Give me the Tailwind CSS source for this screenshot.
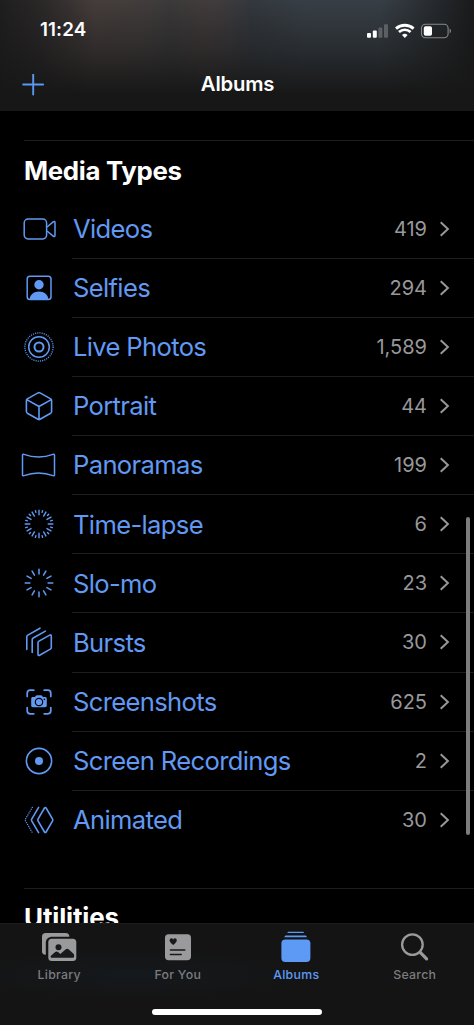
<!DOCTYPE html>
<html lang="en">
<head>
<meta charset="utf-8">
<title>Albums</title>
<script src="https://cdn.jsdelivr.net/npm/@tailwindcss/browser@4"></script>
</head>
<body class="bg-black">
<div class="relative flex h-[1025px] w-[474px] flex-col overflow-hidden bg-black font-['Inter',sans-serif] text-white">

  <header class="h-[111px] shrink-0 bg-[linear-gradient(to_bottom,transparent_0%,rgba(22,22,22,0.45)_45%,#171717_85%),linear-gradient(to_right,#1f1e1e_0%,#2b2828_9%,#453d3b_20%,#423d3c_30%,#3b3a3a_36%,#423b3c_43%,#3f3b3d_47%,#33383e_53%,#373f46_65%,#373f46_80%,#2c3136_88%,#191a1b_100%)]">
    <div class="flex h-[61px] items-center justify-between pr-[22px] pl-[40px]">
      <span class="text-[18.8px] leading-none font-semibold tracking-[0.1px]">11:24</span>
      <svg class="h-[18px] w-[86px]" viewBox="0 0 86 18" fill="none">
        <rect x="1" y="11" width="4" height="4.8" rx="1" fill="#fff"/>
        <rect x="6.8" y="8.6" width="4" height="7.2" rx="1" fill="#fff"/>
        <rect x="12.4" y="5.6" width="4" height="10.2" rx="1" fill="#5b6065"/>
        <rect x="18" y="2.2" width="4" height="13.6" rx="1" fill="#5b6065"/>
        <path d="M30 6.6a13.2 13.2 0 0 1 17.6 0" stroke="#fff" stroke-width="2.8"/>
        <path d="M33 10a8.4 8.4 0 0 1 11.6 0" stroke="#fff" stroke-width="2.6"/>
        <path d="M38.8 16 36 13.1a4.2 4.2 0 0 1 5.6 0z" fill="#fff"/>
        <rect x="55.5" y="2.2" width="26.6" height="13.6" rx="4" stroke="#85888b" stroke-width="1.1"/>
        <rect x="57.8" y="4.3" width="8.2" height="9.5" rx="1.8" fill="#fff"/>
        <path d="M83.6 6.6c1.9.9 1.9 3.9 0 4.8z" fill="#85888b"/>
      </svg>
    </div>
    <div class="grid h-[47px] grid-cols-[1fr_auto_1fr] items-center">
      <svg class="ml-[22px] size-[22px]" viewBox="0 0 22 22" stroke="#5a98f2" stroke-width="1.9" stroke-linecap="round"><path d="M11.2 .5v20M1.200 10.500h20"/></svg>
      <h1 class="pl-px text-[20.3px] leading-none font-semibold tracking-[-0.2px]">Albums</h1>
      <span></span>
    </div>
  </header>

  <main class="h-[812px] shrink-0 overflow-hidden pt-[29px]">
    <section class="ml-6 border-t border-[#1d1d1d]">
      <h2 class="flex h-[59px] items-center pt-px text-[25.8px] font-bold tracking-[-0.3px]">Media Types</h2>
    </section>
    <ul class="text-[25.6px] leading-none tracking-[-0.66px] text-[#6199f3]">
      <li class="flex h-[59.07px] pl-[21px]">
        <svg class="mt-[11px] size-9 shrink-0" viewBox="0 0 36 36" fill="none" stroke="currentColor" stroke-width="1.5" stroke-linejoin="round"><rect x="3.2" y="8.1" width="22.4" height="19.8" rx="3.8"/><path d="m26 16 6.2-5.1c1-.8 1.8-.4 1.8.7v12.8c0 1.1-.8 1.5-1.8.7L26 20"/></svg>
        <div class="ml-[15px] flex grow items-center border-b border-[#1d1d1d] pr-[24px]"><span class="pl-px">Videos</span><span class="ml-auto text-[20px] tracking-normal text-[#98989b]">419</span><svg class="ml-3 h-4 w-[11px]" viewBox="0 0 11 16" fill="none" stroke="#98989b" stroke-width="2"><path d="m1.7 1.3 7.2 6.7-7.2 6.7"/></svg></div>
      </li>
      <li class="flex h-[59.07px] pl-[21px]">
        <svg class="mt-[11px] size-9 shrink-0" viewBox="0 0 36 36" fill="none" stroke="currentColor" stroke-width="1.5"><rect x="6.2" y="6.2" width="23.8" height="23.4" rx="2.8"/><circle cx="18" cy="14.8" r="4.7" fill="currentColor" stroke="none"/><path d="M8.7 29.6c0-4.6 4.1-8 9.3-8s9.3 3.4 9.3 8z" fill="currentColor" stroke="none"/></svg>
        <div class="ml-[15px] flex grow items-center border-b border-[#1d1d1d] pr-[24px]"><span class="pl-px">Selfies</span><span class="ml-auto text-[20px] tracking-normal text-[#98989b]">294</span><svg class="ml-3 h-4 w-[11px]" viewBox="0 0 11 16" fill="none" stroke="#98989b" stroke-width="2"><path d="m1.7 1.3 7.2 6.7-7.2 6.7"/></svg></div>
      </li>
      <li class="flex h-[59.07px] pl-[21px]">
        <svg class="mt-[11px] size-9 shrink-0" viewBox="0 0 36 36" fill="none" stroke="currentColor" stroke-width="1.5"><circle cx="18" cy="18" r="4.5" stroke-width="2"/><circle cx="18" cy="18" r="10.3"/><circle cx="18" cy="18" r="14.1" stroke-width="1.3" stroke-dasharray="1.1 1.115"/></svg>
        <div class="ml-[15px] flex grow items-center border-b border-[#1d1d1d] pr-[24px]"><span class="pl-px">Live Photos</span><span class="ml-auto text-[20px] tracking-normal text-[#98989b]">1,589</span><svg class="ml-3 h-4 w-[11px]" viewBox="0 0 11 16" fill="none" stroke="#98989b" stroke-width="2"><path d="m1.7 1.3 7.2 6.7-7.2 6.7"/></svg></div>
      </li>
      <li class="flex h-[59.07px] pl-[21px]">
        <svg class="mt-[11px] size-9 shrink-0" viewBox="0 0 36 36" fill="none" stroke="currentColor" stroke-width="1.6" stroke-linejoin="round"><path d="M17 4.9a2 2 0 0 1 2 0l10.7 6c.6.4.9.8.9 1.6v11c0 .8-.3 1.3-.9 1.7L19 31.3a2 2 0 0 1-2 0L6.3 25.2c-.6-.4-.9-.9-.9-1.7v-11c0-.8.3-1.2.9-1.6zM5.7 11.6 18 18.5l12.3-6.9M18 18.5v13"/></svg>
        <div class="ml-[15px] flex grow items-center border-b border-[#1d1d1d] pr-[24px]"><span class="pl-px">Portrait</span><span class="ml-auto text-[20px] tracking-normal text-[#98989b]">44</span><svg class="ml-3 h-4 w-[11px]" viewBox="0 0 11 16" fill="none" stroke="#98989b" stroke-width="2"><path d="m1.7 1.3 7.2 6.7-7.2 6.7"/></svg></div>
      </li>
      <li class="flex h-[59.07px] pl-[21px]">
        <svg class="mt-[11px] size-9 shrink-0" viewBox="0 0 36 36" fill="none" stroke="currentColor" stroke-width="1.5" stroke-linejoin="round"><path d="M3 7.400C12.500 10.900 22.500 10.900 32 7.400c.9-.3 1.500 0 1.500.9v19.400c0 .9-.6 1.200-1.500.9-9.500-3.500-19.500-3.500-29 0-.9.300-1.500 0-1.500-.900V8.300c0-.900.600-1.200 1.500-.900z"/></svg>
        <div class="ml-[15px] flex grow items-center border-b border-[#1d1d1d] pr-[24px]"><span class="pl-px">Panoramas</span><span class="ml-auto text-[20px] tracking-normal text-[#98989b]">199</span><svg class="ml-3 h-4 w-[11px]" viewBox="0 0 11 16" fill="none" stroke="#98989b" stroke-width="2"><path d="m1.7 1.3 7.2 6.7-7.2 6.7"/></svg></div>
      </li>
      <li class="flex h-[59.07px] pl-[21px]">
        <svg class="mt-[11px] size-9 shrink-0" viewBox="0 0 36 36" fill="none" stroke="currentColor" stroke-width="1.4" stroke-linecap="round">
          <g id="long-ticks"><path d="M18 4.200v4.600M18 27.200v4.600"/><path d="M18 4.200v4.600M18 27.200v4.600" transform="rotate(30 18 18)"/><path d="M18 4.200v4.600M18 27.200v4.600" transform="rotate(60 18 18)"/></g>
          <use href="#long-ticks" transform="rotate(90 18 18)"/>
          <g id="short-ticks"><path d="M18 4.200v1.800M18 30v1.800" transform="rotate(15 18 18)"/><path d="M18 4.200v1.800M18 30v1.800" transform="rotate(45 18 18)"/><path d="M18 4.200v1.800M18 30v1.800" transform="rotate(75 18 18)"/></g>
          <use href="#short-ticks" transform="rotate(90 18 18)"/>
        </svg>
        <div class="ml-[15px] flex grow items-center border-b border-[#1d1d1d] pr-[24px]"><span class="pl-px">Time-lapse</span><span class="ml-auto text-[20px] tracking-normal text-[#98989b]">6</span><svg class="ml-3 h-4 w-[11px]" viewBox="0 0 11 16" fill="none" stroke="#98989b" stroke-width="2"><path d="m1.7 1.3 7.2 6.7-7.2 6.7"/></svg></div>
      </li>
      <li class="flex h-[59.07px] pl-[21px]">
        <svg class="mt-[11px] size-9 shrink-0" viewBox="0 0 36 36" fill="none" stroke="currentColor" stroke-width="1.5" stroke-linecap="round">
          <g id="slow-ticks"><path d="M18 4.200v4.700M18 27.100v4.700"/><path d="M18 4.200v4.700M18 27.100v4.700" transform="rotate(30 18 18)"/><path d="M18 4.200v4.700M18 27.100v4.700" transform="rotate(60 18 18)"/></g>
          <use href="#slow-ticks" transform="rotate(90 18 18)"/>
        </svg>
        <div class="ml-[15px] flex grow items-center border-b border-[#1d1d1d] pr-[24px]"><span class="pl-px">Slo-mo</span><span class="ml-auto text-[20px] tracking-normal text-[#98989b]">23</span><svg class="ml-3 h-4 w-[11px]" viewBox="0 0 11 16" fill="none" stroke="#98989b" stroke-width="2"><path d="m1.7 1.3 7.2 6.7-7.2 6.7"/></svg></div>
      </li>
      <li class="flex h-[59.07px] pl-[21px]">
        <svg class="mt-[11px] size-9 shrink-0" viewBox="0 0 36 36" fill="none" stroke="currentColor" stroke-width="1.6" stroke-linejoin="round" stroke-linecap="round"><path d="M5.800 25.500V12.800c0-.8.300-1.300 1-1.700L19 4.200M11.200 28.400V15.700c0-.8.300-1.300 1-1.700l12.200-6.900M28.700 11.100l-10.700 6c-.7.400-1 .9-1 1.700v11.400c0 1.200.6 1.500 1.600 1l10.700-6.100c.7-.4 1-.9 1-1.700V12.100c0-1.200-.6-1.500-1.600-1z"/></svg>
        <div class="ml-[15px] flex grow items-center border-b border-[#1d1d1d] pr-[24px]"><span class="pl-px">Bursts</span><span class="ml-auto text-[20px] tracking-normal text-[#98989b]">30</span><svg class="ml-3 h-4 w-[11px]" viewBox="0 0 11 16" fill="none" stroke="#98989b" stroke-width="2"><path d="m1.7 1.3 7.2 6.7-7.2 6.7"/></svg></div>
      </li>
      <li class="flex h-[59.07px] pl-[21px]">
        <svg class="mt-[11px] size-9 shrink-0" viewBox="0 0 36 36" fill="none" stroke="currentColor" stroke-width="1.7" stroke-linecap="round"><path d="M6.200 12.500V9.200c0-2 1-3 3-3h3.600M23.200 6.200h3.600c2 0 3 1 3 3v3.300M29.800 23.500v3.300c0 2-1 3-3 3h-3.600M12.800 29.800H9.200c-2 0-3-1-3-3v-3.300"/><path d="M12 13h2l.9-1.200c.3-.4.6-.6 1.100-.6h4c.5 0 .8.2 1.100.600L22 13h2c1.200 0 1.800.600 1.800 1.700v6.900c0 1.200-.600 1.700-1.800 1.700H12c-1.200 0-1.800-.5-1.800-1.700v-6.900c0-1.100.6-1.700 1.800-1.700z" fill="currentColor" stroke="none"/><circle cx="18" cy="18" r="3.700" stroke="#000" stroke-width="1.200"/><circle cx="23.400" cy="15.400" r=".8" fill="#000" stroke="none"/></svg>
        <div class="ml-[15px] flex grow items-center border-b border-[#1d1d1d] pr-[24px]"><span class="pl-px">Screenshots</span><span class="ml-auto text-[20px] tracking-normal text-[#98989b]">625</span><svg class="ml-3 h-4 w-[11px]" viewBox="0 0 11 16" fill="none" stroke="#98989b" stroke-width="2"><path d="m1.7 1.3 7.2 6.7-7.2 6.7"/></svg></div>
      </li>
      <li class="flex h-[59.07px] pl-[21px]">
        <svg class="mt-[11px] size-9 shrink-0" viewBox="0 0 36 36" fill="none" stroke="currentColor" stroke-width="1.6"><circle cx="18" cy="18" r="12.600"/><circle cx="18" cy="18" r="4" fill="currentColor" stroke="none"/></svg>
        <div class="ml-[15px] flex grow items-center border-b border-[#1d1d1d] pr-[24px]"><span class="pl-px">Screen Recordings</span><span class="ml-auto text-[20px] tracking-normal text-[#98989b]">2</span><svg class="ml-3 h-4 w-[11px]" viewBox="0 0 11 16" fill="none" stroke="#98989b" stroke-width="2"><path d="m1.7 1.3 7.2 6.7-7.2 6.7"/></svg></div>
      </li>
      <li class="flex h-[59.07px] pl-[21px]">
        <svg class="mt-[11px] size-9 shrink-0" viewBox="0 0 36 36" fill="none" stroke="currentColor" stroke-width="1.6" stroke-linejoin="round" stroke-linecap="round"><path d="M23.500 6c.4-.7 1.200-.7 1.600 0l6.500 11.100c.4.7.4 1.100 0 1.800L25.100 30c-.4.700-1.200.700-1.600 0L17 18.900c-.4-.7-.4-1.100 0-1.800zM17.600 5.400l-6.900 11.700c-.4.7-.4 1.100 0 1.800l6.900 11.700"/><path d="M11.300 5.400 4.400 17.200c-.3.500-.3 1.100 0 1.600l6.900 11.800" stroke-width="1.400" stroke-dasharray="0 2.180"/></svg>
        <div class="ml-[15px] flex grow items-center pr-[24px]"><span class="pl-px">Animated</span><span class="ml-auto text-[20px] tracking-normal text-[#98989b]">30</span><svg class="ml-3 h-4 w-[11px]" viewBox="0 0 11 16" fill="none" stroke="#98989b" stroke-width="2"><path d="m1.7 1.3 7.2 6.7-7.2 6.7"/></svg></div>
      </li>
    </ul>
    <section class="mt-[38px] ml-6 border-t border-[#1d1d1d]">
      <h2 class="flex h-[57px] items-center text-[26px] font-bold tracking-[-0.15px]">Utilities</h2>
    </section>
  </main>

  <footer class="flex grow flex-col items-center border-t border-[#1c1c1c] bg-[radial-gradient(ellipse_at_28%_50%,#15191d_0%,#141414_35%)]">
    <nav class="grid h-[85px] w-full grid-cols-4 text-[12.3px] leading-none font-medium tracking-[0.3px] text-[#7c7c7e]">
      <div class="flex flex-col items-center pt-[6px]">
        <svg class="h-[34px] w-[40px]" viewBox="0 0 40 34" fill="none"><path d="M6.800 24.800C4 24.700 3 23.600 3 21V6.700C3 4.200 4.300 3 6.800 3h19.800c2.500 0 3.700 1.200 3.800 3.700H13.600c-4.400 0-6.800 2.300-6.800 6.500z" fill="#9a9a9c"/><rect x="9.300" y="8.800" width="28" height="22.200" rx="3.500" fill="#9a9a9c"/><circle cx="19.500" cy="17.200" r="3" fill="#17191b"/><path d="M11.500 27c0-.6.300-1 .7-1.400l4-3.500c1-.8 1.800-.8 2.800 0l2.300 2 5.200-4.700c1.100-1 2.200-1 3.300 0l4.700 4.400c.4.400.6.800.6 1.400v1.200c0 1-.6 1.400-1.500 1.400H13c-1 0-1.500-.4-1.500-1.300z" fill="#17191b"/></svg>
        <span class="mt-[5px]">Library</span>
      </div>
      <div class="flex flex-col items-center pt-[6px]">
        <svg class="h-[34px] w-[40px]" viewBox="0 0 40 34" fill="none"><rect x="7" y="4.200" width="26" height="26" rx="3.600" fill="#9a9a9c"/><path d="M15.200 15c-2.200-1.700-3.600-3-3.600-4.700 0-2.400 2.700-2.800 3.600-.9.900-1.900 3.600-1.500 3.600.9 0 1.700-1.400 3-3.600 4.700z" fill="#17191b"/><path d="M12.400 20h14.400M12.400 24.500h10.800" stroke="#17191b" stroke-width="1.500" stroke-linecap="round"/></svg>
        <span class="mt-[5px]">For You</span>
      </div>
      <div class="flex flex-col items-center pt-[6px] text-[#5d9af5]">
        <svg class="h-[34px] w-[40px]" viewBox="0 0 40 34" fill="currentColor"><path d="M11.300 3.100c.2-.9.700-1.400 1.600-1.400h13.600c.9 0 1.400.5 1.600 1.400zM8.400 7.200c.2-1.200.8-1.800 1.900-1.800H29c1.100 0 1.700.6 1.900 1.800z"/><rect x="5.400" y="9.500" width="29" height="22.500" rx="4"/></svg>
        <span class="mt-[5px]">Albums</span>
      </div>
      <div class="flex flex-col items-center pt-[6px]">
        <svg class="h-[34px] w-[40px]" viewBox="0 0 40 34" fill="none" stroke="#9a9a9c" stroke-linecap="round"><circle cx="17.400" cy="14.600" r="10.300" stroke-width="2.300"/><path d="m25.200 22.400 6.400 6.500" stroke-width="3.200"/></svg>
        <span class="mt-[5px]">Search</span>
      </div>
    </nav>
    <div class="h-[6px] w-[170px] rounded-full bg-white"></div>
  </footer>

  <div class="absolute top-[517px] right-[4px] h-[318px] w-[4px] rounded-full bg-[#7d7d7d]"></div>
</div>
</body>
</html>
